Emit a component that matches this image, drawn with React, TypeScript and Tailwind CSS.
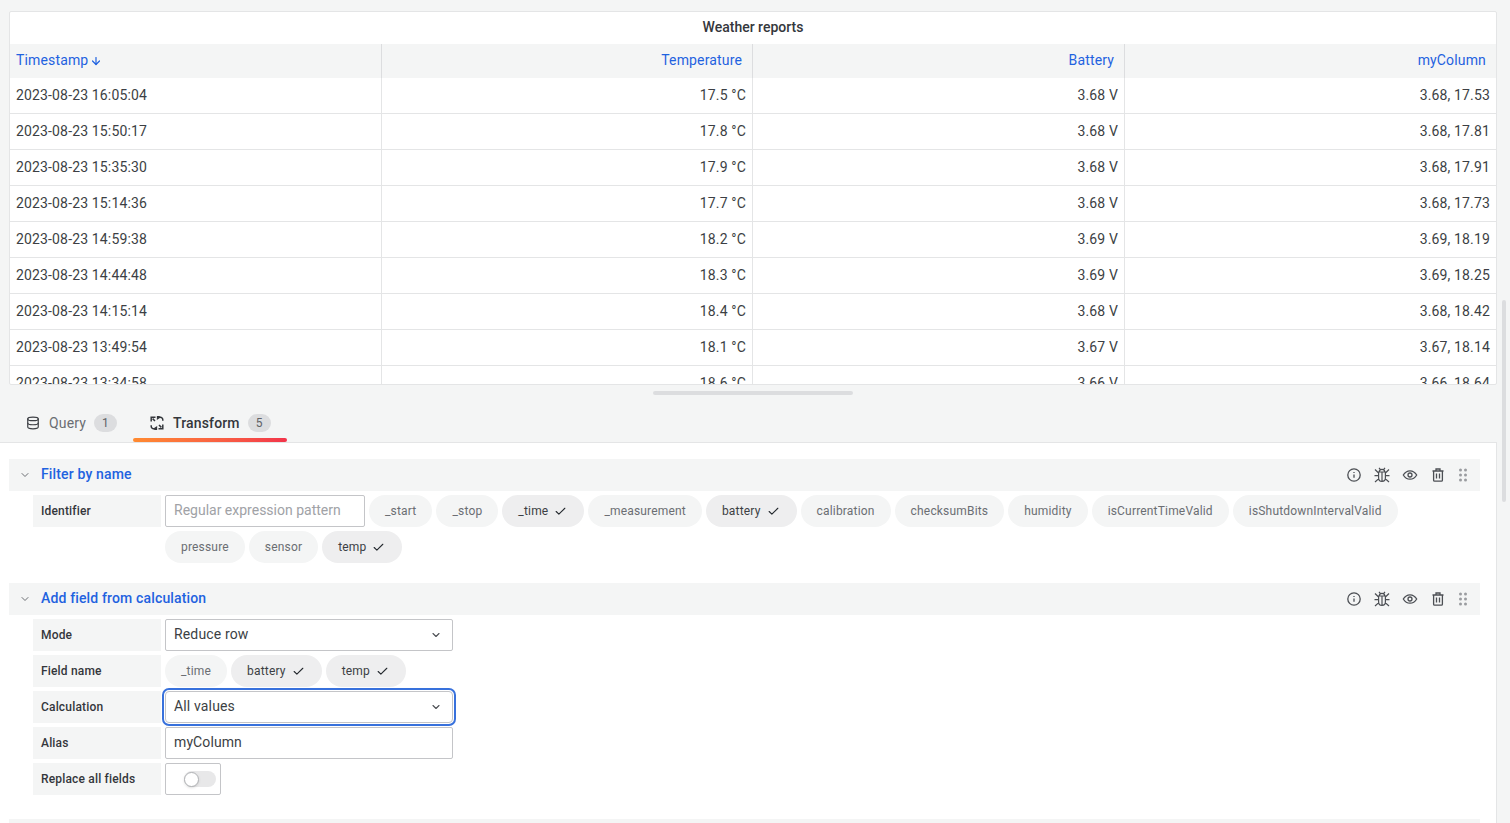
import { ChevronDown, Check, ArrowDown, Database } from 'lucide-react';

const rows = [
  ['2023-08-23 16:05:04', '17.5 °C', '3.68 V', '3.68, 17.53'],
  ['2023-08-23 15:50:17', '17.8 °C', '3.68 V', '3.68, 17.81'],
  ['2023-08-23 15:35:30', '17.9 °C', '3.68 V', '3.68, 17.91'],
  ['2023-08-23 15:14:36', '17.7 °C', '3.68 V', '3.68, 17.73'],
  ['2023-08-23 14:59:38', '18.2 °C', '3.69 V', '3.69, 18.19'],
  ['2023-08-23 14:44:48', '18.3 °C', '3.69 V', '3.69, 18.25'],
  ['2023-08-23 14:15:14', '18.4 °C', '3.68 V', '3.68, 18.42'],
  ['2023-08-23 13:49:54', '18.1 °C', '3.67 V', '3.67, 18.14'],
  ['2023-08-23 13:34:58', '18.6 °C', '3.66 V', '3.66, 18.64'],
];

const filterChips: [string, boolean][] = [
  ['_start', false],
  ['_stop', false],
  ['_time', true],
  ['_measurement', false],
  ['battery', true],
  ['calibration', false],
  ['checksumBits', false],
  ['humidity', false],
  ['isCurrentTimeValid', false],
  ['isShutdownIntervalValid', false],
  ['pressure', false],
  ['sensor', false],
  ['temp', true],
];

function Chip({ label, on }: { label: string; on: boolean }) {
  return (
    <div
      className={`h-8 rounded-full pl-4 flex items-center gap-[6px] text-xs tracking-[0.18px] ${on ? 'pr-[17px] bg-[#eeeeef] text-[#3c3f44]' : 'pr-4 bg-[#f4f5f5] text-[#6b6e73]'}`}
    >
      {label}
      {on && <Check size={13} strokeWidth={2} className="text-[#24292e]" />}
    </div>
  );
}

function Label({ children }: { children: React.ReactNode }) {
  return (
    <div className="w-[128px] h-8 shrink-0 bg-[#f4f5f5] px-2 flex items-center text-xs font-medium tracking-[0.17px] text-[#34373c]">
      {children}
    </div>
  );
}

function HeaderIcons() {
  return (
    <div className="flex items-center gap-3 text-[#4c4f54] pr-[9px]">
      <svg width="16" height="16" viewBox="0 0 16 16" fill="none" stroke="currentColor" strokeWidth="1.3">
        <circle cx="8" cy="8" r="6.2" />
        <path d="M8 7.4v3.4M8 5v1" />
      </svg>
      <svg width="16" height="16" viewBox="0 0 16 16" fill="none" stroke="currentColor" strokeWidth="1.2">
        <path d="M4.6 5h6.8v6a3.4 3.4 0 0 1-6.8 0zM8 5v9.4M5.3 5a2.7 2.7 0 0 1 5.4 0M5 .8l1.5 1.8M11 .8L9.5 2.6M1 2.5L4.6 6M15 2.5L11.4 6M.5 8.6h4.1M15.5 8.6h-4.1M1 15l3.8-3.4M15 15l-3.8-3.4" />
      </svg>
      <svg width="16" height="16" viewBox="0 0 16 16" fill="none" stroke="currentColor" strokeWidth="1.3">
        <path d="M1.3 8C3 5.2 5.3 3.8 8 3.8s5 1.4 6.7 4.2c-1.7 2.8-4 4.2-6.7 4.2S3 10.8 1.3 8z" />
        <circle cx="8" cy="8" r="2" />
      </svg>
      <svg width="16" height="16" viewBox="0 0 16 16" fill="none" stroke="currentColor" strokeWidth="1.3">
        <path d="M2.5 4h11M6 4V2h4v2M3.6 4v9.2c0 .6.4 1 1 1h6.8c.6 0 1-.4 1-1V4M6.5 6.5v5M9.5 6.5v5" />
      </svg>
      <svg className="-ml-[3px]" width="16" height="16" viewBox="0 0 16 16" fill="#9a9ca0">
        <circle cx="5.5" cy="3" r="1.5" />
        <circle cx="10.5" cy="3" r="1.5" />
        <circle cx="5.5" cy="8" r="1.5" />
        <circle cx="10.5" cy="8" r="1.5" />
        <circle cx="5.5" cy="13" r="1.5" />
        <circle cx="10.5" cy="13" r="1.5" />
      </svg>
    </div>
  );
}

function SectionHeader({ title }: { title: string }) {
  return (
    <div className="h-8 bg-[#f4f5f5] flex items-center justify-between">
      <div className="flex items-center">
        <ChevronDown size={12} className="ml-[10px] text-[#6b6e73]" />
        <span className="ml-[10px] pb-[2px] text-sm font-medium tracking-[0.15px] text-[#1f62e0]">{title}</span>
      </div>
      <HeaderIcons />
    </div>
  );
}

function Select({ value, focused }: { value: string; focused?: boolean }) {
  return (
    <div
      className={`w-[288px] h-8 bg-white border border-[#c4c5c8] pl-2 pr-[10px] flex items-center justify-between text-sm tracking-[0.15px] text-[#3c3f44] ${focused ? 'outline-2 outline-offset-1 outline-[#3871dc] rounded-[4px]' : 'rounded-[2px]'}`}
    >
      <span className="pb-[2px]">{value}</span>
      <ChevronDown size={12} strokeWidth={2.2} className="text-[#4c4f54]" />
    </div>
  );
}

export default function App() {
  return (
    <div
      className="w-[1510px] h-[823px] overflow-hidden bg-[#f4f5f5] flex"
      style={{ fontFamily: 'Roboto, "Liberation Sans", sans-serif' }}
    >
      <div className="w-[1497px] shrink-0 flex flex-col">
        {/* Table panel */}
        <div className="ml-[9px] mt-[11px] w-[1488px] h-[374px] shrink-0 bg-white border border-[#e4e5e6] rounded-[2px] overflow-hidden">
          <div className="h-8 pb-[2px] flex items-center justify-center text-sm font-medium text-[#34373c]">Weather reports</div>
          <div className="h-[34px] bg-[#f4f5f5] grid grid-cols-[372px_371px_372px_1fr] text-sm tracking-[0.15px] text-[#1f62e0]">
            <div className="border-r border-[#dcdddf] pl-[6px] pb-[2px] flex items-center gap-[2px]">
              Timestamp <ArrowDown size={12} strokeWidth={2.4} className="mt-[2px]" />
            </div>
            <div className="border-r border-[#dcdddf] pr-[10px] pb-[2px] flex items-center justify-end">Temperature</div>
            <div className="border-r border-[#dcdddf] pr-[10px] pb-[2px] flex items-center justify-end">Battery</div>
            <div className="pr-[10px] pb-[2px] flex items-center justify-end">myColumn</div>
          </div>
          {rows.map((r) => (
            <div
              key={r[0]}
              className="h-9 border-b border-[#e4e5e6] grid grid-cols-[372px_371px_372px_1fr] text-sm tracking-[0.15px] text-[#3c3f44]"
            >
              <div className="border-r border-[#e4e5e6] pl-[6px] pb-[1px] flex items-center">{r[0]}</div>
              <div className="border-r border-[#e4e5e6] pr-[6px] pb-[1px] flex items-center justify-end">{r[1]}</div>
              <div className="border-r border-[#e4e5e6] pr-[6px] pb-[1px] flex items-center justify-end">{r[2]}</div>
              <div className="pr-[6px] pb-[1px] flex items-center justify-end">{r[3]}</div>
            </div>
          ))}
        </div>

        {/* Resize handle */}
        <div className="h-5 shrink-0 ml-[9px] pt-[6px] flex justify-center">
          <div className="w-[200px] h-1 rounded-full bg-[#dcdddf]" />
        </div>

        {/* Tabs */}
        <div className="h-[38px] shrink-0 flex border-b border-[#e4e5e6]">
          <div className="ml-[26px] pb-[2px] h-full flex items-center gap-[8px] text-sm tracking-[0.15px] text-[#6b6e73]">
            <Database size={14} className="text-[#3c3f44]" />
            <span className="ml-[1px]">Query</span>
            <span className="w-[23px] h-[18px] rounded-full bg-[#dcdddf] flex items-center justify-center text-xs text-[#5f6266]">1</span>
          </div>
          <div className="ml-4 w-[154px] h-full pb-[2px] relative flex items-center pl-[17px] gap-2 text-sm font-medium tracking-[0.15px] text-[#34373c]">
            <svg width="14" height="14" viewBox="0 0 14 14" fill="none" stroke="currentColor" strokeWidth="1.5">
              <path d="M5.5 1.2H1.2v4.3M8.5 12.8h4.3V8.5" />
              <path d="M8.7 1.2h1.6a2.5 2.5 0 0 1 2.5 2.5v1M5.3 12.8H3.7a2.5 2.5 0 0 1-2.5-2.5v-1" />
              <path d="M7.6 0L9.6 1.2L7.6 2.6ZM6.4 11.4L4.4 12.8L6.4 14Z" fill="currentColor" />
              <path d="M2.6 2.6L5 5M11.4 11.4L9 9" />
            </svg>
            <span className="ml-[1px]">Transform</span>
            <span className="w-[23px] h-[18px] rounded-full bg-[#dcdddf] flex items-center justify-center text-xs font-normal text-[#5f6266]">5</span>
            <div className="absolute left-0 right-0 bottom-0 h-[4px] rounded-sm bg-gradient-to-r from-[#ff8a30] to-[#f2334a]" />
          </div>
        </div>

        {/* Transformations */}
        <div className="flex-1 bg-white border-r border-[#e4e5e6] pt-4 pl-[9px] pr-[16px]">
          <SectionHeader title="Filter by name" />
          <div className="mt-1 ml-6 flex gap-1">
            <Label>Identifier</Label>
            <div className="flex flex-wrap gap-1 w-[1240px]">
              <div className="w-[200px] h-8 border border-[#c4c5c8] rounded-[2px] px-2 pb-[2px] flex items-center text-sm text-[#a0a2a6]">
                Regular expression pattern
              </div>
              {filterChips.map(([l, on]) => (
                <Chip key={l} label={l} on={on} />
              ))}
            </div>
          </div>

          <div className="mt-5">
            <SectionHeader title="Add field from calculation" />
          </div>
          <div className="mt-1 ml-6 flex flex-col gap-1">
            <div className="flex gap-1">
              <Label>Mode</Label>
              <Select value="Reduce row" />
            </div>
            <div className="flex gap-1">
              <Label>Field name</Label>
              <div className="flex gap-1">
                <Chip label="_time" on={false} />
                <Chip label="battery" on />
                <Chip label="temp" on />
              </div>
            </div>
            <div className="flex gap-1">
              <Label>Calculation</Label>
              <Select value="All values" focused />
            </div>
            <div className="flex gap-1">
              <Label>Alias</Label>
              <div className="w-[288px] h-8 border border-[#c4c5c8] rounded-[2px] px-2 pb-[2px] flex items-center text-sm tracking-[0.1px] text-[#3c3f44]">
                myColumn
              </div>
            </div>
            <div className="flex gap-1">
              <Label>Replace all fields</Label>
              <div className="w-14 h-8 border border-[#c4c5c8] rounded-[2px] pl-[18px] flex items-center">
                <div className="w-8 h-4 rounded-full bg-[#e8e8e9] flex items-center">
                  <div className="w-[15px] h-[15px] rounded-full bg-white border border-[#b0b2b5] shadow-sm" />
                </div>
              </div>
            </div>
          </div>
          <div className="mt-6 h-8 bg-[#f4f5f5]" />
        </div>
      </div>

      {/* Page scrollbar */}
      <div className="flex-1 relative">
        <div className="absolute left-[5px] top-[300px] w-[4px] h-[202px] rounded-full bg-[#dcdddf]" />
      </div>
    </div>
  );
}
